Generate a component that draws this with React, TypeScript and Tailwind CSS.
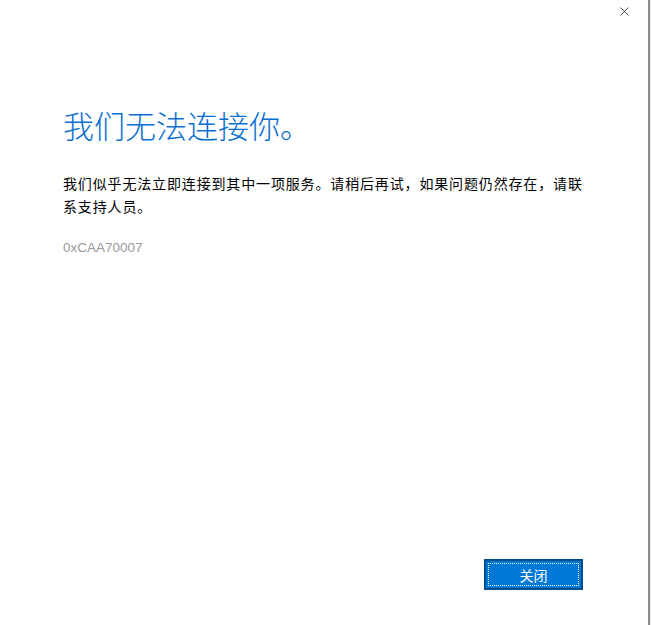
import { X } from 'lucide-react';

const cjk = { fontFamily: '"Noto Sans CJK SC", "Noto Sans", sans-serif' };

export default function App() {
  return (
    <div className="w-[651px] h-[625px] flex bg-white overflow-hidden" style={cjk}>
      <div className="flex-1 flex flex-col">
        {/* title bar */}
        <div className="h-[24px] flex justify-end items-start pr-[14px] pt-[1px]">
          <button className="w-[20px] h-[20px] flex items-center justify-center text-black">
            <X size={15} strokeWidth={1.1} />
          </button>
        </div>

        <div className="flex-1 flex flex-col pl-[63px]">
          <h1 className="mt-[81px] text-[31px] leading-[40px] font-light text-[#0a6fd1]">
            我们无法连接你。
          </h1>
          <p className="mt-[27px] w-[530px] text-[14px] leading-[23px] tracking-[0.85px] text-black">
            我们似乎无法立即连接到其中一项服务。请稍后再试，如果问题仍然存在，请联系支持人员。
          </p>
          <div
            className="mt-[20px] text-[13.5px] leading-[20px] text-[#999999]"
            style={{ fontFamily: '"Liberation Sans", Arial, sans-serif' }}
          >
            0xCAA70007
          </div>

          <div className="flex-1" />

          <div className="flex justify-end pr-[65px] mb-[35px]">
            <button className="w-[99px] h-[31px] border-2 border-[#004e8c] bg-[#0078d7] p-[2px]">
              <span className="w-full h-full flex items-center justify-center border border-dotted border-white text-white text-[14px] leading-none">
                关闭
              </span>
            </button>
          </div>
        </div>
      </div>
      {/* window edge */}
      <div className="w-[3px] flex">
        <div className="w-[2px] bg-[#8c8c8c]" />
        <div className="w-[1px] bg-[#e6e6e6]" />
      </div>
    </div>
  );
}
